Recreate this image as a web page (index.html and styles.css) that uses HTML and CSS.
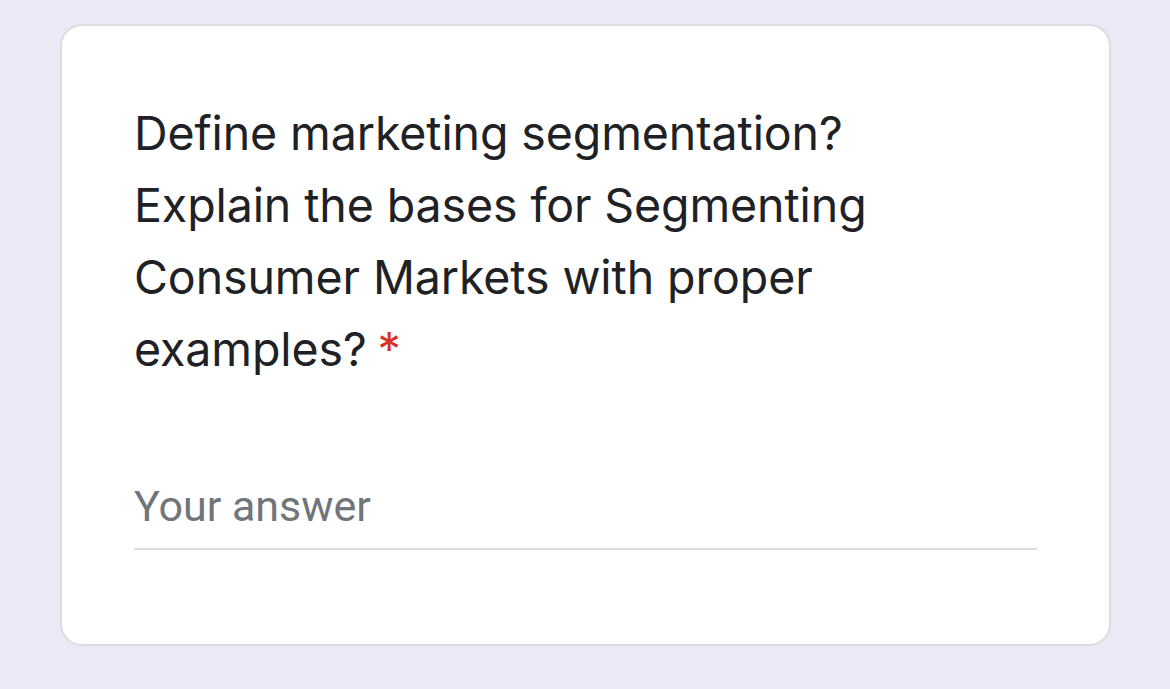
FILE: index.html
```html
<!DOCTYPE html>
<html lang="en">
<head>
<meta charset="utf-8">
<title>Question</title>
<link rel="stylesheet" href="styles.css">
</head>
<body>
<main class="page">
  <section class="card">
    <h2 class="question"><span class="question-text">Define marketing segmentation? Explain the bases for Segmenting Consumer Markets with proper examples?</span><span class="required">*</span></h2>
    <div class="answer">
      <span class="placeholder">Your answer</span>
    </div>
  </section>
</main>
</body>
</html>
```
FILE: styles.css
```css
html, body {
  margin: 0;
  padding: 0;
}
body {
  background: #ece9f6;
  width: 1170px;
  height: 689px;
  overflow: hidden;
}
.page {
  padding: 24px 60px 0 60px;
}
.card {
  box-sizing: border-box;
  width: 1051px;
  height: 622px;
  background: #ffffff;
  border: 2px solid #dadce0;
  border-radius: 22px;
  padding: 71px 72px 0 72px;
}
.question {
  margin: 0;
  width: 780px;
  font-family: "Inter", "Roboto", sans-serif;
  font-weight: 400;
  font-size: 46.5px;
  line-height: 72px;
  color: #202124;
  letter-spacing: -0.1px;
}
.required {
  color: #d93025;
  margin-left: 11px;
}
.answer {
  margin-top: 97px;
  width: 903px;
  border-bottom: 2px solid #dadce0;
  padding-bottom: 18px;
}
.placeholder {
  display: block;
  font-family: "Roboto", sans-serif;
  font-size: 43px;
  line-height: 48px;
  color: #70757a;
}
```
